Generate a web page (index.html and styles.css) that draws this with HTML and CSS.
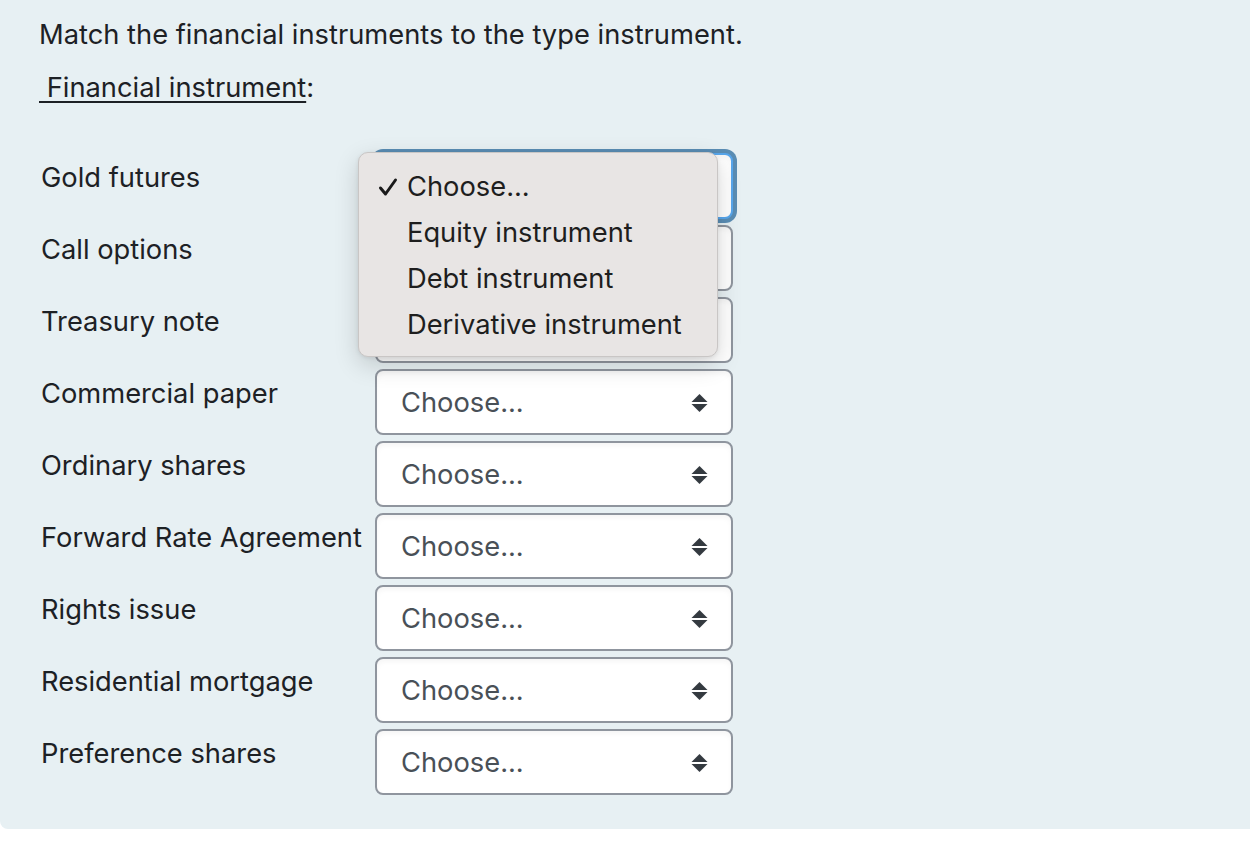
FILE: index.html
```html
<!DOCTYPE html>
<html lang="en">
<head>
<meta charset="utf-8">
<title>Match</title>
<link rel="stylesheet" href="styles.css">
</head>
<body>
<div class="panel">
  <p class="qtext">Match the financial instruments to the type instrument.</p>
  <p class="sub"><u>&nbsp;Financial instrument</u>:</p>
  <div class="rows">
    <div class="row">
      <div class="label">Gold futures</div>
      <div class="select focused">
        <span class="val">Choose...</span>
        <span class="arrows"><svg width="17" height="20" viewBox="0 0 17 20"><path d="M8.5 1 L16.5 9 H0.5 Z M0.5 11 H16.5 L8.5 19 Z" fill="#343a40"/></svg></span>
      </div>
      <div class="popup">
        <div class="opt"><span class="check"><svg width="20" height="20" viewBox="0 0 20 20"><path d="M2.5 11 L7.5 17 L17.5 3" fill="none" stroke="#1a1a1a" stroke-width="3" stroke-linecap="round" stroke-linejoin="round"/></svg></span>Choose...</div>
        <div class="opt"><span class="check"></span>Equity instrument</div>
        <div class="opt"><span class="check"></span>Debt instrument</div>
        <div class="opt"><span class="check"></span>Derivative instrument</div>
      </div>
    </div>
    <div class="row">
      <div class="label">Call options</div>
      <div class="select"><span class="val">Choose...</span><span class="arrows"><svg width="17" height="20" viewBox="0 0 17 20"><path d="M8.5 1 L16.5 9 H0.5 Z M0.5 11 H16.5 L8.5 19 Z" fill="#343a40"/></svg></span></div>
    </div>
    <div class="row">
      <div class="label">Treasury note</div>
      <div class="select"><span class="val">Choose...</span><span class="arrows"><svg width="17" height="20" viewBox="0 0 17 20"><path d="M8.5 1 L16.5 9 H0.5 Z M0.5 11 H16.5 L8.5 19 Z" fill="#343a40"/></svg></span></div>
    </div>
    <div class="row">
      <div class="label">Commercial paper</div>
      <div class="select"><span class="val">Choose...</span><span class="arrows"><svg width="17" height="20" viewBox="0 0 17 20"><path d="M8.5 1 L16.5 9 H0.5 Z M0.5 11 H16.5 L8.5 19 Z" fill="#343a40"/></svg></span></div>
    </div>
    <div class="row">
      <div class="label">Ordinary shares</div>
      <div class="select"><span class="val">Choose...</span><span class="arrows"><svg width="17" height="20" viewBox="0 0 17 20"><path d="M8.5 1 L16.5 9 H0.5 Z M0.5 11 H16.5 L8.5 19 Z" fill="#343a40"/></svg></span></div>
    </div>
    <div class="row">
      <div class="label">Forward Rate Agreement</div>
      <div class="select"><span class="val">Choose...</span><span class="arrows"><svg width="17" height="20" viewBox="0 0 17 20"><path d="M8.5 1 L16.5 9 H0.5 Z M0.5 11 H16.5 L8.5 19 Z" fill="#343a40"/></svg></span></div>
    </div>
    <div class="row">
      <div class="label">Rights issue</div>
      <div class="select"><span class="val">Choose...</span><span class="arrows"><svg width="17" height="20" viewBox="0 0 17 20"><path d="M8.5 1 L16.5 9 H0.5 Z M0.5 11 H16.5 L8.5 19 Z" fill="#343a40"/></svg></span></div>
    </div>
    <div class="row">
      <div class="label">Residential mortgage</div>
      <div class="select"><span class="val">Choose...</span><span class="arrows"><svg width="17" height="20" viewBox="0 0 17 20"><path d="M8.5 1 L16.5 9 H0.5 Z M0.5 11 H16.5 L8.5 19 Z" fill="#343a40"/></svg></span></div>
    </div>
    <div class="row">
      <div class="label">Preference shares</div>
      <div class="select"><span class="val">Choose...</span><span class="arrows"><svg width="17" height="20" viewBox="0 0 17 20"><path d="M8.5 1 L16.5 9 H0.5 Z M0.5 11 H16.5 L8.5 19 Z" fill="#343a40"/></svg></span></div>
    </div>
  </div>
</div>
</body>
</html>
```

FILE: styles.css
```css
html, body {
  margin: 0;
  padding: 0;
  background: #ffffff;
}
body {
  font-family: Inter, "Liberation Sans", Arial, sans-serif;
  font-size: 27.3px;
  color: #1d2125;
  width: 1250px;
  height: 844px;
  overflow: hidden;
}
.panel {
  width: 1260px;
  background: #e7f0f3;
  border-radius: 0 0 8px 8px;
  padding: 15px 0 34px 39px;
  box-sizing: border-box;
}
.qtext, .sub {
  margin: 0;
  line-height: 40px;
}
.qtext {
  margin-bottom: 13px;
}
.sub u {
  text-decoration-thickness: 2px;
  text-underline-offset: 4px;
}
.rows {
  margin-top: 45px;
  display: flex;
  flex-direction: column;
  gap: 6px;
}
.row {
  display: flex;
  align-items: flex-start;
  position: relative;
}
.label {
  width: 336px;
  padding-left: 2px;
  padding-top: 5px;
  line-height: 40px;
  box-sizing: border-box;
  white-space: nowrap;
}
.select {
  width: 358px;
  height: 66px;
  box-sizing: border-box;
  border: 2px solid #8f959e;
  border-radius: 8px;
  background: #ffffff;
  box-shadow: inset 0 3px 5px rgba(0, 0, 0, 0.04);
  display: flex;
  align-items: center;
  justify-content: space-between;
  padding: 0 23px 0 24px;
  color: #495057;
}
.select .val {
  line-height: 40px;
  padding-top: 2px;
}
.arrows {
  display: flex;
  align-items: center;
  padding-top: 2px;
}
.select.focused {
  border-color: #57a6ec;
  box-shadow: 0 0 0 4px #5a8db4, inset 0 3px 5px rgba(0, 0, 0, 0.04);
}
.popup {
  position: absolute;
  z-index: 10;
  left: 319px;
  top: -1px;
  width: 360px;
  height: 205px;
  box-sizing: border-box;
  background: #e8e5e4;
  border: 1px solid #c9c6c5;
  border-radius: 10px;
  box-shadow: 0 8px 24px rgba(0, 0, 0, 0.16), 0 1px 4px rgba(0, 0, 0, 0.08);
  padding: 11px 0 10px 0;
  color: #1e1e1e;
}
.opt {
  height: 46px;
  line-height: 46px;
  display: flex;
  align-items: center;
  white-space: nowrap;
}
.check {
  width: 48px;
  padding-left: 19px;
  box-sizing: border-box;
  display: flex;
  align-items: center;
  flex-shrink: 0;
}
```
